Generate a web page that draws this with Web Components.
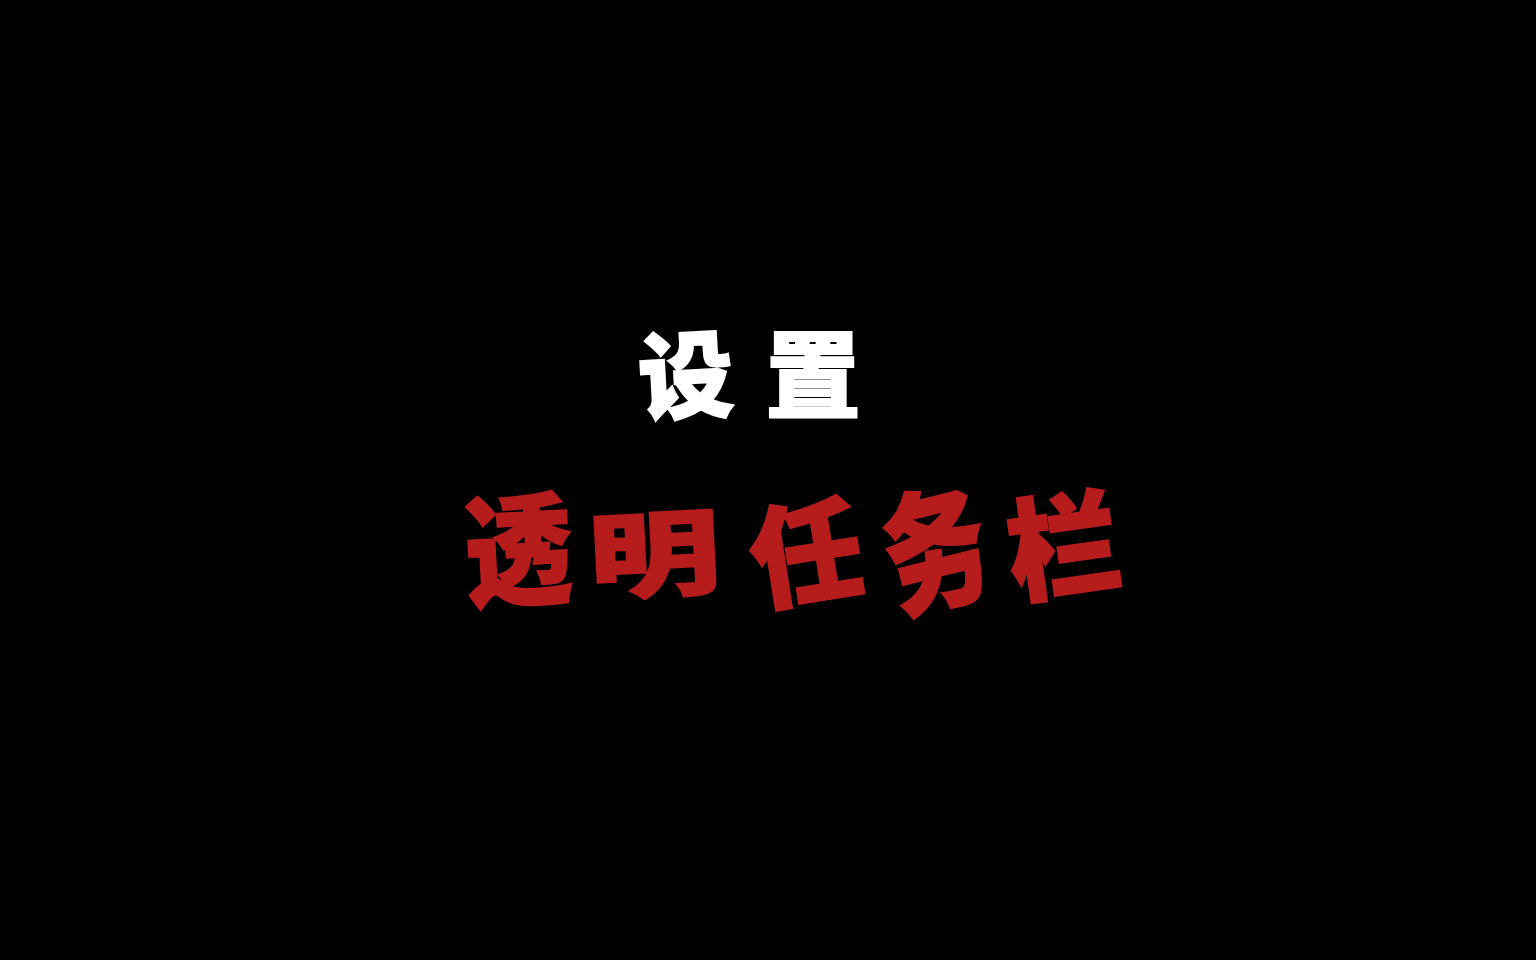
<!DOCTYPE html>
<html lang="zh">
<head>
<meta charset="utf-8">
<title>透明任务栏</title>
<style>
html,body{margin:0;height:100%;background:#000;}
</style>
</head>
<body>
<title-card>
	<card-line slot="top" size="95" stroke="2" color="#fff" shift="-37">
		<card-glyph rotate="-3">设</card-glyph>
		<card-glyph rotate="0" gap="32">置</card-glyph>
	</card-line>
	<card-line slot="bottom" size="112" stroke="2" color="#b71c1c" shift="44">
		<card-glyph rotate="-3" rise="-4" sy="1.08" sx=".96">透</card-glyph>
		<card-glyph rotate="-3" gap="24" rise="2" sx="1.18" sy=".84">明</card-glyph>
		<card-glyph rotate="-9" gap="39" rise="0">任</card-glyph>
		<card-glyph rotate="-14" gap="17" rise="-4" sx=".92" sy="1.18">务</card-glyph>
		<card-glyph rotate="-8" gap="17" rise="-7">栏</card-glyph>
	</card-line>
</title-card>
<script>
const cardTemplate = document.createElement('template')
cardTemplate.innerHTML=`
<style>
:host{
	display:flex;
	flex-direction:column;
	align-items:center;
	box-sizing:border-box;
	width:100%;
	height:960px;
	padding-top:322px;
	background:#000;
}
.bottom{
	margin-top:73px;
}
</style>
<slot name="top"></slot>
<div class="bottom"><slot name="bottom"></slot></div>
`

class TitleCard extends HTMLElement{
	constructor(){
		super();
		this.attachShadow({mode:'open'})
		this.shadowRoot.appendChild(cardTemplate.content.cloneNode(true))
	}
}

class CardLine extends HTMLElement{
	constructor(){
		super();
		this.attachShadow({mode:'open'})
		const size=this.getAttribute('size')
		const stroke=this.getAttribute('stroke')
		const color=this.getAttribute('color')
		const shift=this.getAttribute('shift')
		this.shadowRoot.innerHTML=`
<style>
:host{
	display:flex;
	font-family:"Noto Sans CJK SC",sans-serif;
	font-weight:900;
	line-height:1;
	white-space:nowrap;
	font-size:${size}px;
	color:${color};
	-webkit-text-stroke:${stroke}px ${color};
	margin-left:${shift}px;
}
</style>
<slot></slot>
`
	}
}

class CardGlyph extends HTMLElement{
	constructor(){
		super();
		this.attachShadow({mode:'open'})
		const rotate=this.getAttribute('rotate')||0
		const gap=this.getAttribute('gap')||0
		const rise=this.getAttribute('rise')||0
		const sx=this.getAttribute('sx')||1
		const sy=this.getAttribute('sy')||1
		this.shadowRoot.innerHTML=`
<style>
:host{
	display:block;
	margin-left:${gap}px;
	margin-top:${rise}px;
	transform:rotate(${rotate}deg) scale(${sx},${sy});
}
</style>
<slot></slot>
`
	}
}

window.customElements.define('title-card', TitleCard)
window.customElements.define('card-line', CardLine)
window.customElements.define('card-glyph', CardGlyph)
</script>
</body>
</html>
